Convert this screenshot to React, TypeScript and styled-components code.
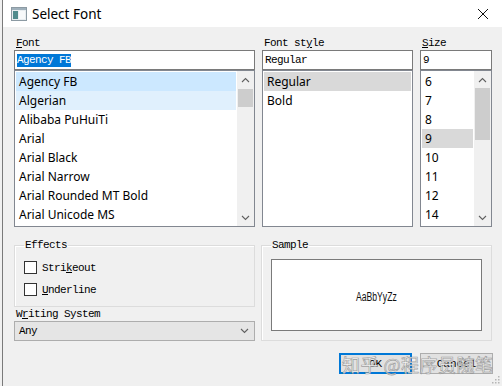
import React from 'react';
import styled, {createGlobalStyle} from 'styled-components';

const GlobalStyle = createGlobalStyle`
  html, body {
    margin: 0;
    padding: 0;
    background: #f0f0f0;
  }
  * {
    box-sizing: border-box;
  }
`;

const mono = `"Liberation Mono", "DejaVu Sans Mono", monospace`;
const ui = `"Noto Sans", "Open Sans", sans-serif`;

const fonts = [
    'Agency FB',
    'Algerian',
    'Alibaba PuHuiTi',
    'Arial',
    'Arial Black',
    'Arial Narrow',
    'Arial Rounded MT Bold',
    'Arial Unicode MS',
];
const styles = ['Regular', 'Bold'];
const sizes = ['6', '7', '8', '9', '10', '11', '12', '14'];

const Chevron: React.FC<{ up?: boolean }> = ({up}) => (
    <svg width="9" height="6" viewBox="0 0 9 6">
        <polyline
            points={up ? '1,5 4.5,1.5 8,5' : '1,1 4.5,4.5 8,1'}
            fill="none"
            stroke="#606060"
            strokeWidth="1.1"
        />
    </svg>
);

const ScrollBar: React.FC<{ thumbTop: number, thumbHeight: number }> = ({thumbTop, thumbHeight}) => (
    <Track>
        <ArrowBox><Chevron up/></ArrowBox>
        <ThumbArea>
            <Thumb style={{top: thumbTop, height: thumbHeight}}/>
        </ThumbArea>
        <ArrowBox><Chevron/></ArrowBox>
    </Track>
);

const App: React.FC = () => {
    return (
        <>
            <GlobalStyle/>
            <Window>
                <TitleBar>
                    <svg width="16" height="14" viewBox="0 0 16 14">
                        <rect x="0.5" y="0.5" width="15" height="13" fill="#e8edf0" stroke="#8c9aa3"/>
                        <rect x="1" y="1" width="14" height="2" fill="#9fb0bb"/>
                        <rect x="2" y="4" width="5" height="8" fill="#4f8a8c"/>
                        <rect x="8" y="4" width="6" height="8" fill="#f7f9fa"/>
                    </svg>
                    <Title>Select Font</Title>
                    <CloseIcon width="12" height="12" viewBox="0 0 12 12">
                        <path d="M1 1 L11 11 M11 1 L1 11" stroke="#111" strokeWidth="1"/>
                    </CloseIcon>
                </TitleBar>

                <Body>
                    <TopRow>
                        <Column $width={241}>
                            <FieldLabel><u>F</u>ont</FieldLabel>
                            <TextInput><Highlighted>Agency FB</Highlighted></TextInput>
                            <ListBox>
                                <Items>
                                    {fonts.map((f, i) => (
                                        <Item key={f} $bg={i === 0 ? '#cce8ff' : i === 1 ? '#e0f0fd' : 'transparent'}>
                                            {f}
                                        </Item>
                                    ))}
                                </Items>
                                <ScrollBar thumbTop={1} thumbHeight={18}/>
                            </ListBox>
                        </Column>

                        <Column $width={151}>
                            <FieldLabel>Font st<u>y</u>le</FieldLabel>
                            <TextInput>Regular</TextInput>
                            <ListBox>
                                <Items>
                                    {styles.map((s, i) => (
                                        <Item key={s} $bg={i === 0 ? '#d9d9d9' : 'transparent'}>{s}</Item>
                                    ))}
                                </Items>
                            </ListBox>
                        </Column>

                        <Column $width={72}>
                            <FieldLabel><u>S</u>ize</FieldLabel>
                            <TextInput>9</TextInput>
                            <ListBox>
                                <Items>
                                    {sizes.map((s) => (
                                        <Item key={s} $bg={s === '9' ? '#d9d9d9' : 'transparent'}>{s}</Item>
                                    ))}
                                </Items>
                                <ScrollBar thumbTop={0} thumbHeight={52}/>
                            </ListBox>
                        </Column>
                    </TopRow>

                    <BottomRow>
                        <LeftPane>
                            <GroupBox $height={69}>
                                <Legend>Effects</Legend>
                                <CheckList>
                                    <CheckRow>
                                        <CheckBox/>
                                        <CheckLabel>Stri<u>k</u>eout</CheckLabel>
                                    </CheckRow>
                                    <CheckRow>
                                        <CheckBox/>
                                        <CheckLabel><u>U</u>nderline</CheckLabel>
                                    </CheckRow>
                                </CheckList>
                            </GroupBox>
                            <FieldLabel>W<u>r</u>iting System</FieldLabel>
                            <Combo>
                                <span>Any</span>
                                <Chevron/>
                            </Combo>
                        </LeftPane>

                        <GroupBox $height={103} $grow>
                            <Legend>Sample</Legend>
                            <SampleBox>
                                <SampleText>AaBbYyZz</SampleText>
                            </SampleBox>
                        </GroupBox>
                    </BottomRow>

                    <ButtonRow>
                        <Button $default>OK</Button>
                        <Button>Cancel</Button>
                    </ButtonRow>
                </Body>

                <Watermark>知乎 @程序员随笔</Watermark>
                <SizeGrip width="8" height="8" viewBox="0 0 8 8">
                    <rect x="6" y="0" width="1.5" height="1.5" fill="#b5b5b5"/>
                    <rect x="3" y="3" width="1.5" height="1.5" fill="#b5b5b5"/>
                    <rect x="6" y="3" width="1.5" height="1.5" fill="#b5b5b5"/>
                    <rect x="0" y="6" width="1.5" height="1.5" fill="#b5b5b5"/>
                    <rect x="3" y="6" width="1.5" height="1.5" fill="#b5b5b5"/>
                    <rect x="6" y="6" width="1.5" height="1.5" fill="#b5b5b5"/>
                </SizeGrip>
            </Window>
        </>
    );
};

const Window = styled.div`
  position: relative;
  width: 500px;
  height: 386px;
  margin-left: 2px;
  border-left: 1px solid #7a7a7a;
  background: #f0f0f0;
  overflow: hidden;
`;

const TitleBar = styled.div`
  display: flex;
  align-items: center;
  height: 27px;
  padding-left: 8px;
  padding-right: 8px;
  background: #fff;
`;

const Title = styled.div`
  margin-left: 5px;
  font-family: ${ui};
  font-size: 13.5px;
  color: #000;
  flex: 1;
`;

const CloseIcon = styled.svg`
  margin-right: 5px;
`;

const Body = styled.div`
  padding: 9px 8px 0 11px;
`;

const TopRow = styled.div`
  display: flex;
  gap: 6px;
`;

const Column = styled.div<{ $width: number }>`
  display: flex;
  flex-direction: column;
  width: ${p => p.$width}px;
  & + & {
    margin-left: ${p => p.$width === 72 ? 1 : 0}px;
  }
`;

const FieldLabel = styled.div`
  height: 14px;
  line-height: 14px;
  padding-left: 2px;
  font-family: ${mono};
  font-size: 11px;
  letter-spacing: -0.6px;
  color: #000;
  white-space: nowrap;
`;

const TextInput = styled.div`
  height: 20px;
  display: flex;
  align-items: center;
  padding-left: 2px;
  border: 1px solid #7a7a7a;
  background: #fff;
  font-family: ${mono};
  font-size: 11px;
  letter-spacing: -0.6px;
  color: #000;
`;

const Highlighted = styled.span`
  background: #0078d7;
  color: #fff;
  line-height: 13px;
`;

const ListBox = styled.div`
  display: flex;
  height: 157px;
  border: 1px solid #828790;
  background: #fff;
`;

const Items = styled.div`
  flex: 1;
  padding: 1px 1px 0 1px;
  overflow: hidden;
`;

const Item = styled.div<{ $bg: string }>`
  height: 19px;
  line-height: 19px;
  padding-left: 3px;
  background: ${p => p.$bg};
  font-family: ${ui};
  font-size: 12px;
  color: #000;
  white-space: nowrap;
`;

const Track = styled.div`
  width: 17px;
  display: flex;
  flex-direction: column;
  background: #f0f0f0;
`;

const ArrowBox = styled.div`
  height: 17px;
  display: flex;
  align-items: center;
  justify-content: center;
`;

const ThumbArea = styled.div`
  flex: 1;
  position: relative;
`;

const Thumb = styled.div`
  position: absolute;
  left: 1px;
  right: 1px;
  background: #cdcdcd;
`;

const BottomRow = styled.div`
  display: flex;
  gap: 6px;
  margin-top: 11px;
`;

const LeftPane = styled.div`
  width: 241px;
  display: flex;
  flex-direction: column;
`;

const GroupBox = styled.fieldset<{ $height: number, $grow?: boolean }>`
  margin: 0;
  padding: 0 9px 0 9px;
  height: ${p => p.$height}px;
  width: ${p => p.$grow ? '231px' : 'auto'};
  min-width: 0;
  border: 1px solid #dcdcdc;
  box-shadow: inset 1px 1px 0 #fff;
`;

const Legend = styled.legend`
  padding: 0 1px;
  line-height: 14px;
  font-family: ${mono};
  font-size: 11px;
  letter-spacing: -0.6px;
  color: #000;
`;

const CheckList = styled.div`
  display: flex;
  flex-direction: column;
  gap: 9px;
  padding-top: 9px;
`;

const CheckRow = styled.div`
  display: flex;
  align-items: center;
  height: 13px;
`;

const CheckBox = styled.div`
  width: 13px;
  height: 13px;
  border: 1px solid #333;
  background: #fff;
`;

const CheckLabel = styled.span`
  margin-left: 5px;
  font-family: ${mono};
  font-size: 11px;
  letter-spacing: -0.6px;
  color: #000;
`;

const Combo = styled.div`
  height: 20px;
  display: flex;
  align-items: center;
  justify-content: space-between;
  padding: 0 5px 0 4px;
  border: 1px solid #adadad;
  background: #e5e5e5;
  font-family: ${mono};
  font-size: 11px;
  letter-spacing: -0.6px;
  color: #000;
`;

const SampleBox = styled.div`
  margin-top: 7px;
  height: 72px;
  width: 211px;
  display: flex;
  align-items: center;
  justify-content: center;
  border: 1px solid #7a7a7a;
  background: #fff;
`;

const SampleText = styled.span`
  display: inline-block;
  margin-top: 3px;
  font-family: "Liberation Sans", Arial, sans-serif;
  font-size: 12px;
  color: #111;
  transform: scaleX(0.72);
`;

const ButtonRow = styled.div`
  display: flex;
  justify-content: flex-end;
  gap: 8px;
  margin-top: 12px;
  padding-right: 1px;
`;

const Button = styled.div<{ $default?: boolean }>`
  width: 73px;
  height: 21px;
  display: flex;
  align-items: center;
  justify-content: center;
  background: #e1e1e1;
  border: ${p => p.$default ? '2px solid #0078d7' : '1px solid #adadad'};
  font-family: ${mono};
  font-size: 11px;
  color: #000;
`;

const Watermark = styled.div`
  position: absolute;
  left: 339px;
  top: 352px;
  font-family: "Noto Sans CJK SC", sans-serif;
  font-size: 18px;
  line-height: 24px;
  color: rgba(255, 255, 255, 0.9);
  -webkit-text-stroke: 0.7px rgba(130, 130, 130, 0.75);
  white-space: nowrap;
  letter-spacing: 0.5px;
`;

const SizeGrip = styled.svg`
  position: absolute;
  right: 2px;
  bottom: 2px;
`;

export default App;
